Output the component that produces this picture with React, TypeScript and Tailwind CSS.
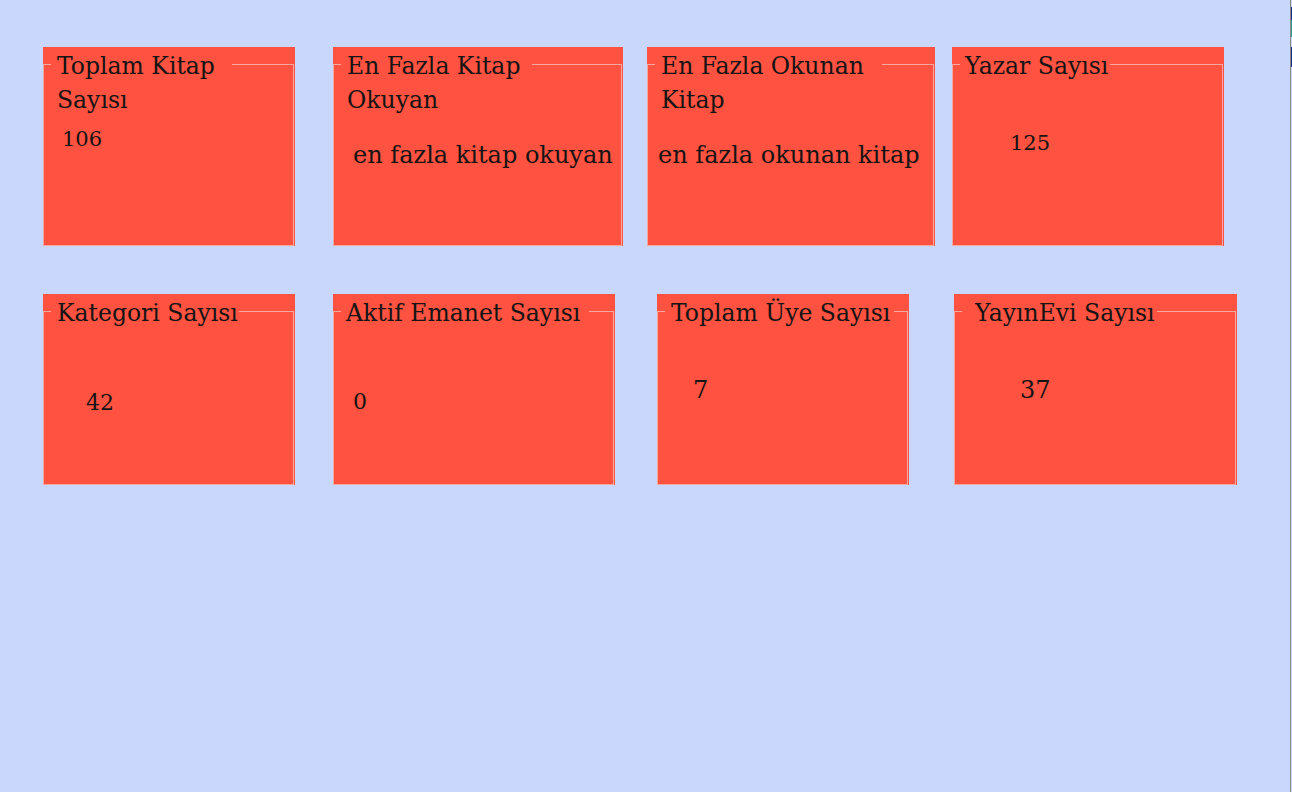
import React from 'react';

interface StatCard {
  lines: string[];
  value: string;
  boxClass: string;
  titleClass: string;
  valueClass: string;
}

const firstRow: StatCard[] = [
  {
    lines: ['Toplam Kitap', 'Sayısı'],
    value: '106',
    boxClass: 'w-[252px]',
    titleClass: 'w-[181px] pl-[6px]',
    valueClass: 'mt-[12px] pl-[18px] text-[21px]',
  },
  {
    lines: ['En Fazla Kitap', 'Okuyan'],
    value: 'en fazla kitap okuyan',
    boxClass: 'w-[290px] ml-[38px]',
    titleClass: 'w-[191px] pl-[6px]',
    valueClass: 'mt-[26px] pl-[19px] text-[24px]',
  },
  {
    lines: ['En Fazla Okunan', 'Kitap'],
    value: 'en fazla okunan kitap',
    boxClass: 'w-[288px] ml-[24px]',
    titleClass: 'w-[227px] pl-[6px]',
    valueClass: 'mt-[26px] pl-[10px] text-[24px]',
  },
  {
    lines: ['Yazar Sayısı'],
    value: '125',
    boxClass: 'w-[272px] ml-[17px]',
    titleClass: 'w-[150px] pl-[5px]',
    valueClass: 'mt-[50px] pl-[57px] text-[21px]',
  },
];

const secondRow: StatCard[] = [
  {
    lines: ['Kategori Sayısı'],
    value: '42',
    boxClass: 'w-[252px]',
    titleClass: 'w-[188px] pl-[6px]',
    valueClass: 'mt-[62px] pl-[42px] text-[22px]',
  },
  {
    lines: ['Aktif Emanet Sayısı'],
    value: '0',
    boxClass: 'w-[282px] ml-[38px]',
    titleClass: 'w-[248px] pl-[5px]',
    valueClass: 'mt-[61px] pl-[19px] text-[22px]',
  },
  {
    lines: ['Toplam Üye Sayısı'],
    value: '7',
    boxClass: 'w-[252px] ml-[42px]',
    titleClass: 'w-[229px] pl-[6px]',
    valueClass: 'mt-[48px] pl-[35px] text-[24px]',
  },
  {
    lines: ['YayınEvi Sayısı'],
    value: '37',
    boxClass: 'w-[283px] ml-[45px]',
    titleClass: 'w-[195px] pl-[13px]',
    valueClass: 'mt-[48px] pl-[65px] text-[24px]',
  },
];

function GroupBox({ card, height }: { card: StatCard; height: string }) {
  return (
    <div className={`${card.boxClass} ${height} shrink-0 bg-[#ff5240] flex flex-col`}>
      {/* etched frame starts at the middle of the caption's first line */}
      <div className="mt-[17px] mr-[1px] flex-1 flex flex-col border-x border-b border-[#f5a89f]">
        <div className="-mt-[15px] flex items-start">
          <span className="mt-[15px] w-[7px] border-t border-[#f5a89f]" />
          <span className={`${card.titleClass} shrink-0 whitespace-nowrap text-[23.5px] leading-[34px] text-[#141414]`}>
            {card.lines.map((line, i) => (
              <span key={i} className="block">
                {line}
              </span>
            ))}
          </span>
          <span className="mt-[15px] flex-1 border-t border-[#f5a89f]" />
        </div>
        <p className={`${card.valueClass} leading-none whitespace-nowrap text-[#141414]`}>{card.value}</p>
      </div>
    </div>
  );
}

export default function App() {
  return (
    <div className="h-[792px] w-full flex overflow-hidden bg-[#c9d7fc] font-['DejaVu_Serif',serif]">
      <main className="flex-1 pt-[47px] pl-[43px]">
        <div className="flex">
          {firstRow.map((card) => (
            <GroupBox key={card.value} card={card} height="h-[199px]" />
          ))}
        </div>
        <div className="flex mt-[48px]">
          {secondRow.map((card) => (
            <GroupBox key={card.value} card={card} height="h-[191px]" />
          ))}
        </div>
      </main>
      {/* edge of the neighbouring window */}
      <div className="w-px bg-[#8c8c8c]" />
      <div className="w-px flex flex-col bg-[#c9d7fc]">
        <div className="h-[7px]" />
        <div className="h-[13px] bg-[#1c2a8c]" />
        <div className="h-[17px] bg-[#2a9c8c]" />
        <div className="h-[10px]" />
        <div className="h-[20px] bg-[#1c2a8c]" />
      </div>
    </div>
  );
}
